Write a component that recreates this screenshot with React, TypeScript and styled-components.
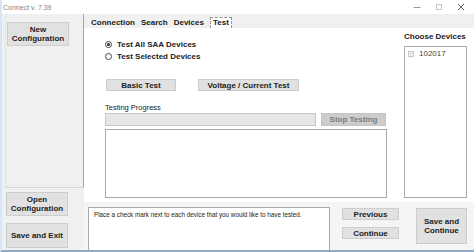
import styled, { createGlobalStyle } from 'styled-components';

const GlobalStyle = createGlobalStyle`
  html, body {
    margin: 0;
    padding: 0;
    background: #ffffff;
  }
  * {
    box-sizing: border-box;
  }
`;

const Window = styled.div`
  display: flex;
  flex-direction: column;
  width: 474px;
  height: 252px;
  overflow: hidden;
  border-left: 2px solid #d6e6f6;
  border-bottom: 2px solid #8fa9c6;
  background-color: #f0f0f0;
  font-family: 'Liberation Sans', Arial, sans-serif;
  color: #111;
`;

const TitleBar = styled.div`
  display: flex;
  align-items: center;
  height: 14px;
  padding-left: 1px;
  background-color: #ffffff;
`;

const Title = styled.span`
  font-size: 7px;
  color: #858585;
`;

const Controls = styled.div`
  display: flex;
  align-items: center;
  margin-left: auto;
  margin-right: 9px;
  gap: 14px;
`;

const Body = styled.div`
  display: flex;
  flex: 1;
`;

const LeftCol = styled.div`
  display: flex;
  flex-direction: column;
  width: 82px;
`;

const SidePanel = styled.div`
  width: 79px;
  height: 174px;
  margin-left: 3px;
  padding: 8px 0 0 1px;
  border-right: 1px solid #a7a7a7;
  border-bottom: 1px solid #d4d4d4;
  border-left: 1px solid #e8e2da;
  background-color: #f0f0f0;
`;

const LeftButtons = styled.div`
  display: flex;
  flex-direction: column;
  gap: 7px;
  margin: 4px 0 0 4px;
`;

const Button = styled.button<{ $w: number; $h: number; $disabled?: boolean }>`
  display: flex;
  align-items: center;
  justify-content: center;
  width: ${(p) => p.$w}px;
  height: ${(p) => p.$h}px;
  padding: 0;
  border: 1px solid ${(p) => (p.$disabled ? '#c4c4c4' : '#cdcdcd')};
  background-color: ${(p) => (p.$disabled ? '#cccccc' : '#e1e1e1')};
  color: ${(p) => (p.$disabled ? '#7c7c7c' : '#222')};
  font-family: inherit;
  font-size: 8px;
  font-weight: 700;
  line-height: 9px;
  text-align: center;
`;

const RightCol = styled.div`
  display: flex;
  flex: 1;
  flex-direction: column;
`;

const TabStrip = styled.div`
  display: flex;
  align-items: flex-end;
  height: 14px;
  padding-left: 4px;
  background-color: #f0f0f0;
`;

const Tab = styled.div<{ $active?: boolean }>`
  height: 11px;
  padding: 0 2px;
  margin-left: ${(p) => (p.$active ? '3px' : '0')};
  border: 1px ${(p) => (p.$active ? 'dashed #9a9a9a' : 'solid transparent')};
  border-bottom: none;
  background-color: ${(p) => (p.$active ? '#ffffff' : 'transparent')};
  font-size: 8px;
  font-weight: 700;
  line-height: 10px;
  color: #1a1a1a;
`;

const TabPage = styled.div`
  display: flex;
  height: 174px;
  background-color: #ffffff;
`;

const Main = styled.div`
  display: flex;
  flex: 0 0 320px;
  flex-direction: column;
  padding: 10px 0 0 21px;
`;

const RadioRow = styled.div`
  display: flex;
  align-items: center;
  gap: 5px;
  height: 12px;
  font-size: 8px;
  font-weight: 700;
  color: #222;
`;

const Radio = styled.span<{ $checked?: boolean }>`
  display: flex;
  align-items: center;
  justify-content: center;
  width: 7px;
  height: 7px;
  border: 1px solid #444;
  border-radius: 50%;
  background-color: #ffffff;
  &::after {
    content: '';
    width: 3px;
    height: 3px;
    border-radius: 50%;
    background-color: ${(p) => (p.$checked ? '#2a2a2a' : 'transparent')};
  }
`;

const TestButtons = styled.div`
  display: flex;
  gap: 22px;
  margin: 17px 0 0 1px;
`;

const FieldLabel = styled.div`
  height: 9px;
  margin-top: 12px;
  font-size: 7.5px;
  line-height: 9px;
  color: #222;
`;

const ProgressRow = styled.div`
  display: flex;
  gap: 5px;
  margin-top: 1px;
`;

const ProgressBar = styled.div`
  width: 211px;
  height: 13px;
  border: 1px solid #c6c6c6;
  background-color: #e6e6e6;
`;

const LogBox = styled.div`
  width: 282px;
  height: 69px;
  margin-top: 3px;
  border: 1px solid #a9a9a9;
  background-color: #ffffff;
`;

const Side = styled.div`
  display: flex;
  flex-direction: column;
  width: 63px;
  padding-top: 5px;
`;

const SideLabel = styled.div`
  height: 8px;
  font-size: 8px;
  font-weight: 700;
  line-height: 8px;
  white-space: nowrap;
  color: #222;
`;

const DeviceList = styled.div`
  height: 152px;
  margin-top: 5px;
  padding: 2px 3px;
  border: 1px solid #a9a9a9;
  background-color: #ffffff;
`;

const DeviceItem = styled.div`
  display: flex;
  align-items: center;
  gap: 5px;
  height: 9px;
  font-size: 8px;
  line-height: 9px;
  color: #444;
`;

const Check = styled.span`
  display: flex;
  align-items: center;
  justify-content: center;
  width: 6px;
  height: 6px;
  border: 1px solid #c8c8c8;
  background-color: #f4f4f4;
`;

const BottomArea = styled.div`
  display: flex;
  flex: 1;
  padding: 5px 0 0 4px;
  background-color: #f5f5f5;
`;

const Instructions = styled.div`
  width: 242px;
  height: 43px;
  padding: 3px 5px;
  border: 1px solid #a9a9a9;
  border-bottom: none;
  background-color: #ffffff;
  font-size: 6.3px;
  line-height: 8px;
  color: #222;
  white-space: nowrap;
`;

const NavButtons = styled.div`
  display: flex;
  flex-direction: column;
  gap: 7px;
  margin: 1px 0 0 12px;
`;

const FinishSlot = styled.div`
  margin: 1px 0 0 17px;
`;

const App: React.FC = () => {
  return (
    <>
      <GlobalStyle />
      <Window>
        <TitleBar>
          <Title>Connect v. 7.39</Title>
          <Controls>
            <svg width="8" height="8" viewBox="0 0 8 8">
              <path d="M0.5 4.5 H7.5" stroke="#9a9a9a" strokeWidth="1" />
            </svg>
            <svg width="8" height="8" viewBox="0 0 8 8">
              <rect x="1.5" y="1.5" width="5" height="5" fill="none" stroke="#c6c6c6" strokeWidth="1" />
            </svg>
            <svg width="8" height="8" viewBox="0 0 8 8">
              <path d="M1 1 L7 7 M7 1 L1 7" stroke="#555" strokeWidth="0.9" />
            </svg>
          </Controls>
        </TitleBar>
        <Body>
          <LeftCol>
            <SidePanel>
              <Button $w={62} $h={24}>
                New
                <br />
                Configuration
              </Button>
            </SidePanel>
            <LeftButtons>
              <Button $w={62} $h={24}>
                Open
                <br />
                Configuration
              </Button>
              <Button $w={62} $h={25}>
                Save and Exit
              </Button>
            </LeftButtons>
          </LeftCol>
          <RightCol>
            <TabStrip>
              <Tab>Connection</Tab>
              <Tab>Search</Tab>
              <Tab>Devices</Tab>
              <Tab $active>Test</Tab>
            </TabStrip>
            <TabPage>
              <Main>
                <RadioRow>
                  <Radio $checked />
                  Test All SAA Devices
                </RadioRow>
                <RadioRow>
                  <Radio />
                  Test Selected Devices
                </RadioRow>
                <TestButtons>
                  <Button $w={70} $h={12}>
                    Basic Test
                  </Button>
                  <Button $w={101} $h={12}>
                    Voltage / Current Test
                  </Button>
                </TestButtons>
                <FieldLabel>Testing Progress</FieldLabel>
                <ProgressRow>
                  <ProgressBar />
                  <Button $w={65} $h={13} $disabled>
                    Stop Testing
                  </Button>
                </ProgressRow>
                <LogBox />
              </Main>
              <Side>
                <SideLabel>Choose Devices</SideLabel>
                <DeviceList>
                  <DeviceItem>
                    <Check>
                      <svg width="5" height="5" viewBox="0 0 5 5">
                        <path d="M0.6 2.6 L2 4 L4.4 1" fill="none" stroke="#b5b5b5" strokeWidth="0.8" />
                      </svg>
                    </Check>
                    102017
                  </DeviceItem>
                </DeviceList>
              </Side>
            </TabPage>
            <BottomArea>
              <Instructions>
                Place a check mark next to each device that you would like to have tested.
              </Instructions>
              <NavButtons>
                <Button $w={57} $h={12}>
                  Previous
                </Button>
                <Button $w={57} $h={12}>
                  Continue
                </Button>
              </NavButtons>
              <FinishSlot>
                <Button $w={51} $h={36}>
                  Save and
                  <br />
                  Continue
                </Button>
              </FinishSlot>
            </BottomArea>
          </RightCol>
        </Body>
      </Window>
    </>
  );
};

export default App;
